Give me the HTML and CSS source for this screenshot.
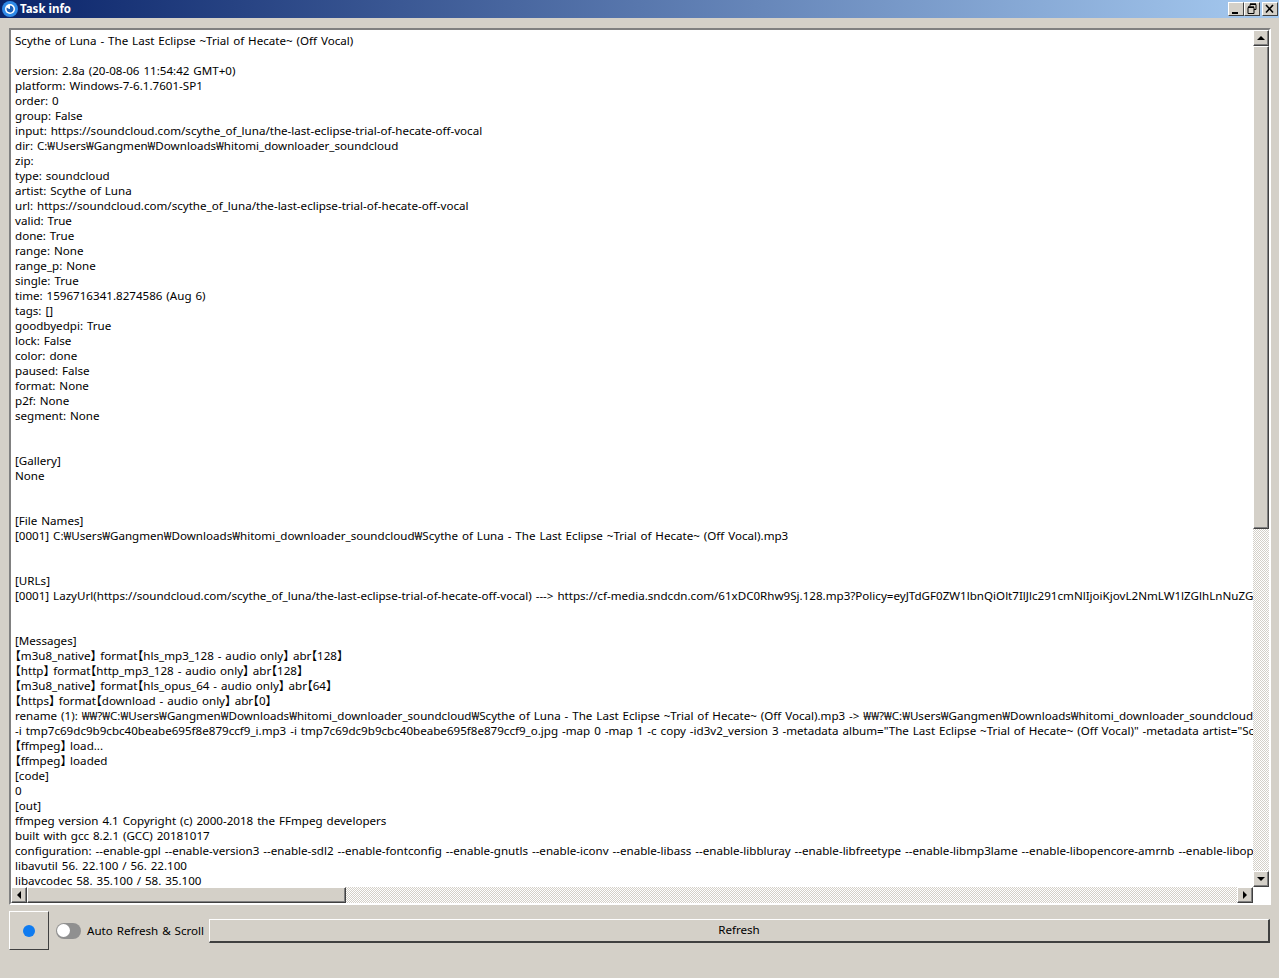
FILE: index.html
```html
<!DOCTYPE html>
<html lang="en">
<head>
<meta charset="utf-8">
<title>Task info</title>
<link rel="stylesheet" href="styles.css">
</head>
<body>
<div class="window">
  <header class="titlebar">
    <svg class="app-icon" width="16" height="16" viewBox="0 0 16 16"><circle cx="8" cy="8" r="8" fill="#2f8ae8"/><circle cx="8" cy="8" r="5" fill="#fff"/><path d="M8 4.5a3.5 3.5 0 1 1-3.2 2.1A4 4 0 0 0 8 8z" fill="#1c5fb8"/></svg>
    <span class="title">Task info</span>
    <div class="win-buttons">
      <button class="win-btn"><svg width="14" height="12" viewBox="0 0 14 12"><rect x="3" y="9" width="6" height="2" fill="#000"/></svg></button>
      <button class="win-btn"><svg width="14" height="12" viewBox="0 0 14 12"><path d="M5 1.5h6v5h-2M5 1.5v2M3 4.5h6v6H3z M3 3.8h6M5 .8h6" fill="none" stroke="#000"/></svg></button>
      <button class="win-btn win-close"><svg width="14" height="12" viewBox="0 0 14 12"><path d="M3 2l7 7.5M10 2l-7 7.5" stroke="#000" stroke-width="1.6" fill="none"/></svg></button>
    </div>
  </header>
  <main class="content">
    <section class="textbox">
      <div class="viewport">
        <pre class="log">Scythe of Luna - The Last Eclipse ~Trial of Hecate~ (Off Vocal)

version: 2.8a (20-08-06 11:54:42 GMT+0)
platform: Windows-7-6.1.7601-SP1
order: 0
group: False
input: https://soundcloud.com/scythe_of_luna/the-last-eclipse-trial-of-hecate-off-vocal
dir: C:₩Users₩Gangmen₩Downloads₩hitomi_downloader_soundcloud
zip:
type: soundcloud
artist: Scythe of Luna
url: https://soundcloud.com/scythe_of_luna/the-last-eclipse-trial-of-hecate-off-vocal
valid: True
done: True
range: None
range_p: None
single: True
time: 1596716341.8274586 (Aug 6)
tags: []
goodbyedpi: True
lock: False
color: done
paused: False
format: None
p2f: None
segment: None


[Gallery]
None


[File Names]
[0001] C:₩Users₩Gangmen₩Downloads₩hitomi_downloader_soundcloud₩Scythe of Luna - The Last Eclipse ~Trial of Hecate~ (Off Vocal).mp3


[URLs]
[0001] LazyUrl(https://soundcloud.com/scythe_of_luna/the-last-eclipse-trial-of-hecate-off-vocal) ---&gt; https://cf-media.sndcdn.com/61xDC0Rhw9Sj.128.mp3?Policy=eyJTdGF0ZW1lbnQiOlt7IlJlc291cmNlIjoiKjovL2NmLW1lZGlhLnNuZGNkbi5jb20v


[Messages]
【m3u8_native】 format【hls_mp3_128 - audio only】 abr【128】
【http】 format【http_mp3_128 - audio only】 abr【128】
【m3u8_native】 format【hls_opus_64 - audio only】 abr【64】
【https】 format【download - audio only】 abr【0】
rename (1): ₩₩?₩C:₩Users₩Gangmen₩Downloads₩hitomi_downloader_soundcloud₩Scythe of Luna - The Last Eclipse ~Trial of Hecate~ (Off Vocal).mp3 -&gt; ₩₩?₩C:₩Users₩Gangmen₩Downloads₩hitomi_downloader_soundcloud₩Scythe
-i tmp7c69dc9b9cbc40beabe695f8e879ccf9_i.mp3 -i tmp7c69dc9b9cbc40beabe695f8e879ccf9_o.jpg -map 0 -map 1 -c copy -id3v2_version 3 -metadata album="The Last Eclipse ~Trial of Hecate~ (Off Vocal)" -metadata artist="Scythe of Luna"
【ffmpeg】 load...
【ffmpeg】 loaded
[code]
0
[out]
ffmpeg version 4.1 Copyright (c) 2000-2018 the FFmpeg developers
built with gcc 8.2.1 (GCC) 20181017
configuration: --enable-gpl --enable-version3 --enable-sdl2 --enable-fontconfig --enable-gnutls --enable-iconv --enable-libass --enable-libbluray --enable-libfreetype --enable-libmp3lame --enable-libopencore-amrnb --enable-libopencore-amrwb
libavutil 56. 22.100 / 56. 22.100
libavcodec 58. 35.100 / 58. 35.100</pre>
      </div>
      <div class="vbar">
        <button class="sb-btn"><span class="tri tri-up"></span></button>
        <div class="track"><div class="thumb thumb-v"></div></div>
        <button class="sb-btn"><span class="tri tri-down"></span></button>
      </div>
      <div class="hbar">
        <button class="sb-btn"><span class="tri tri-left"></span></button>
        <div class="track track-h"><div class="thumb thumb-h"></div></div>
        <button class="sb-btn"><span class="tri tri-right"></span></button>
      </div>
      <div class="corner"></div>
    </section>
    <footer class="controls">
      <button class="status-btn"><span class="dot"></span></button>
      <span class="toggle"><span class="knob"></span></span>
      <span class="toggle-label">Auto Refresh &amp; Scroll</span>
      <button class="refresh">Refresh</button>
    </footer>
  </main>
</div>
</body>
</html>
```
FILE: styles.css
```css
* { box-sizing: border-box; }
html, body { margin: 0; height: 100%; }
body {
  background: #d4d0c8;
  font-family: "Noto Sans", "Noto Sans CJK KR", sans-serif;
  font-size: 11.6px;
  color: #000;
  overflow: hidden;
}
.window { display: flex; flex-direction: column; height: 978px; }
.titlebar {
  height: 18px;
  display: flex;
  align-items: center;
  padding: 0 1px 0 2px;
  background: linear-gradient(90deg, #0a246a 0%, #a6caf0 100%);
  color: #fff;
}
.app-icon { flex: none; }
.title { margin-left: 2px; font: bold 11.5px/18px "Noto Sans", sans-serif; }
.win-buttons { margin-left: auto; display: flex; align-items: center; }
.win-btn {
  width: 16px; height: 14px; padding: 0;
  display: flex; align-items: center; justify-content: center;
  background: #d4d0c8;
  border: 1px solid; border-color: #fff #404040 #404040 #fff;
}
.win-close { margin-left: 2px; }
.content { flex: 1; display: flex; flex-direction: column; padding: 10px 8px 0 9px; }
.textbox {
  display: grid;
  grid-template-columns: 1fr 16px;
  grid-template-rows: 857px 16px;
  height: 877px;
  width: 1262px;
  border: 2px solid; border-color: #808080 #fff #fff #808080;
  box-shadow: inset 1px 1px 0 #404040;
  background: #fff;
}
.viewport { overflow: hidden; background: #fff; padding: 3px 0 0 4px; }
.log {
  margin: 0;
  font: 11.6px/15px "Noto Sans", "Noto Sans CJK KR", sans-serif;
  font-feature-settings: "halt";
  word-spacing: 0.9px;
  color: #000;
  white-space: pre;
}
.vbar { display: flex; flex-direction: column; }
.hbar { display: flex; }
.sb-btn {
  flex: none; width: 16px; height: 16px; padding: 0;
  display: flex; align-items: center; justify-content: center;
  background: #d4d0c8;
  border: 1px solid; border-color: #fff #404040 #404040 #fff;
  box-shadow: inset -1px -1px 0 #808080;
}
.track {
  flex: 1; display: flex; flex-direction: column;
  background-color: #fff;
  background-image: conic-gradient(#d4d0c8 25%, #fff 0 50%, #d4d0c8 0 75%, #fff 0);
  background-size: 2px 2px;
}
.track-h { flex-direction: row; }
.thumb {
  background: #d4d0c8;
  border: 1px solid; border-color: #fff #404040 #404040 #fff;
  box-shadow: inset -1px -1px 0 #808080;
}
.thumb-v { height: 483px; }
.thumb-h { width: 319px; }
.corner { background: #fff; }
.tri { width: 0; height: 0; border: 4px solid transparent; }
.tri-up { border-bottom-color: #000; border-top-width: 0; }
.tri-down { border-top-color: #000; border-bottom-width: 0; }
.tri-left { border-right-color: #000; border-left-width: 0; }
.tri-right { border-left-color: #000; border-right-width: 0; }
.controls { display: flex; align-items: center; margin-top: 6px; height: 39px; width: 1261px; }
.status-btn {
  flex: none; width: 40px; height: 39px; padding: 0;
  display: flex; align-items: center; justify-content: center;
  background: #d4d0c8;
  border: 1px solid; border-color: #fff #404040 #404040 #fff;
}
.dot { width: 12px; height: 12px; border-radius: 50%; background: #0f7bf0; }
.toggle {
  flex: none; margin-left: 7px; width: 25px; height: 16px; border-radius: 8px;
  background: #909090; display: flex; align-items: center; padding-left: 1px;
}
.knob { width: 13px; height: 13px; border-radius: 50%; background: #fff; }
.toggle-label { margin-left: 6px; white-space: nowrap; word-spacing: 0.9px; }
.refresh {
  flex: 1; margin-left: 5px; height: 24px; padding: 0 0 2px;
  background: #d4d0c8; color: #000;
  font: 11.6px "Noto Sans", sans-serif;
  border: 1px solid; border-color: #fff #404040 #404040 #fff;
  border-width: 1px 2px 2px 1px;
}
```
